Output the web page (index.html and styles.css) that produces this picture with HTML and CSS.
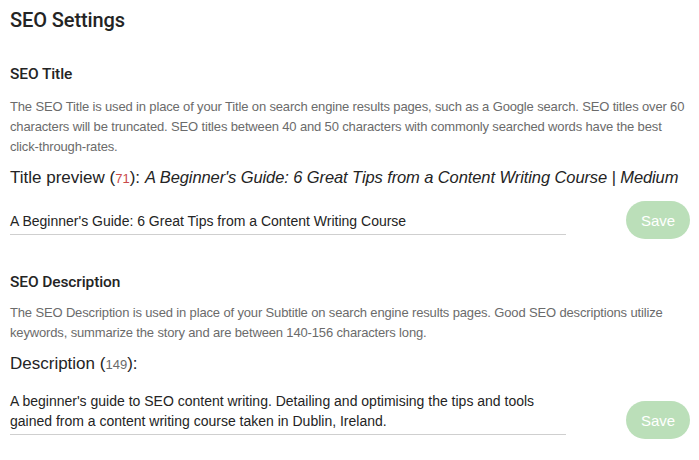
FILE: index.html
```html
<!DOCTYPE html>
<html>
<head>
<meta charset="utf-8">
<link rel="stylesheet" href="styles.css">
</head>
<body>
<div class="page">
  <h1 class="page-title">SEO Settings</h1>

  <section class="section section-title">
    <h2 class="section-heading">SEO Title</h2>
    <p class="help">The SEO Title is used in place of your Title on search engine results pages, such as a Google search. SEO titles over 60 characters will be truncated. SEO titles between 40 and 50 characters with commonly searched words have the best click-through-rates.</p>
    <div class="preview">Title preview (<span class="count count-over">71</span>):<span class="preview-text">A Beginner's Guide: 6 Great Tips from a Content Writing Course | Medium</span></div>
    <div class="field-row field-row-title">
      <div class="field">A Beginner's Guide: 6 Great Tips from a Content Writing Course</div>
      <button class="save">Save</button>
    </div>
  </section>

  <section class="section section-desc">
    <h2 class="section-heading">SEO Description</h2>
    <p class="help">The SEO Description is used in place of your Subtitle on search engine results pages. Good SEO descriptions utilize keywords, summarize the story and are between 140-156 characters long.</p>
    <div class="preview">Description (<span class="count">149</span>):</div>
    <div class="field-row field-row-desc">
      <div class="field">A beginner's guide to SEO content writing. Detailing and optimising the tips and tools gained from a content writing course taken in Dublin, Ireland.</div>
      <button class="save">Save</button>
    </div>
  </section>
</div>
</body>
</html>
```

FILE: styles.css
```css
html, body {
  margin: 0;
  padding: 0;
  background: #ffffff;
}
body {
  font-family: "Liberation Sans", Arial, sans-serif;
  color: #242424;
}
.page {
  padding: 8px 9px 0 10px;
}
.page-title {
  margin: 0;
  font-family: Roboto, "Liberation Sans", sans-serif;
  font-size: 20px;
  line-height: 24px;
  font-weight: 500;
  letter-spacing: -0.1px;
}
.section-title {
  margin-top: 32px;
}
.section-desc {
  margin-top: 33px;
}
.section-heading {
  margin: 0;
  font-family: Roboto, "Liberation Sans", sans-serif;
  font-size: 15.5px;
  line-height: 20px;
  font-weight: 500;
  letter-spacing: -0.1px;
}
.help {
  margin: 13px 0 0;
  font-size: 13px;
  line-height: 20px;
  color: #6b6b6b;
  letter-spacing: -0.15px;
}
.section-desc .help {
  margin-top: 11px;
}
.preview {
  margin-top: 8px;
  font-size: 17px;
  line-height: 24px;
  color: #242424;
  white-space: nowrap;
}
.section-desc .preview {
  margin-top: 9px;
}
.count {
  font-size: 13px;
  color: #6b6b6b;
}
.count-over {
  color: #c94a4a;
}
.preview-text {
  font-style: italic;
  margin-left: 5px;
  font-size: 16.5px;
  letter-spacing: -0.1px;
}
.field-row {
  display: flex;
  align-items: flex-end;
  justify-content: space-between;
}
.field-row-title {
  margin-top: 10px;
}
.field-row-desc {
  margin-top: 14px;
}
.field {
  width: 556px;
  box-sizing: border-box;
  font-size: 14px;
  line-height: 20px;
  padding-bottom: 3px;
  border-bottom: 1px solid #cfcfcf;
  margin-bottom: 4px;
  color: #242424;
}
.field-row-title .field {
  margin-top: 10px;
}
.save {
  width: 64px;
  height: 38px;
  border: none;
  border-radius: 19px;
  background: #bbdfb9;
  color: #ffffff;
  font-family: "Liberation Sans", Arial, sans-serif;
  font-size: 15px;
  padding: 0;
  margin-right: 0;
}
```
